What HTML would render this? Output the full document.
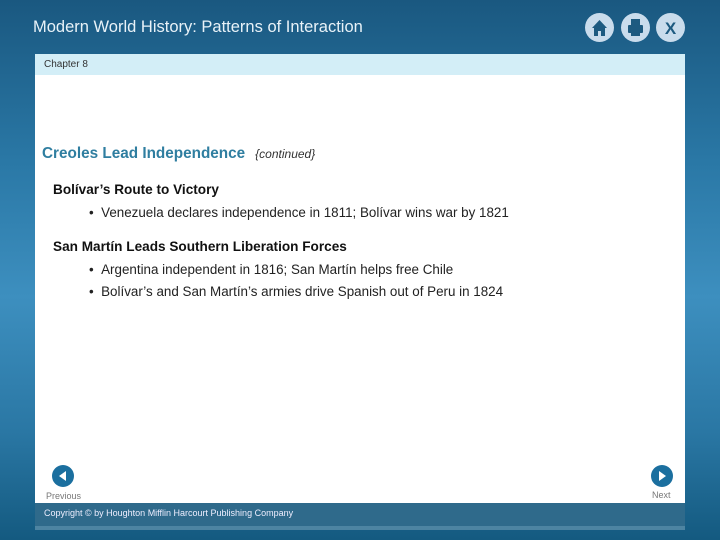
<!DOCTYPE html>
<html><head><style>
body{margin:0;width:720px;height:540px;overflow:hidden;font-family:"Liberation Sans",sans-serif;
background:linear-gradient(180deg,#1a5880 0%,#2a78a6 30%,#3d8fbf 55%,#2a77a4 80%,#145a80 100%);position:relative}
.t{position:absolute;left:33px;top:18px;color:#e8f2f8;font-size:16.5px}
.panel{position:absolute;left:35px;top:54px;width:650px;height:449px;background:#fff}
.ch{position:absolute;left:35px;top:54px;width:650px;height:21px;background:#d3eef7;font-size:10px;color:#333;line-height:21px}
.ch span{margin-left:9px}
.ft{position:absolute;left:35px;top:503px;width:650px;height:27px;background:#2f6a8b;color:#eef;font-size:9px}
.ft span{position:absolute;left:9px;top:5px}
.ft i{position:absolute;left:0;bottom:0;width:100%;height:4px;background:#4d84a2}
.ic{position:absolute;top:13px;width:29px;height:29px;border-radius:50%;background:#c9dcec}
.h{position:absolute;left:42px;top:145px;color:#2f7ea0;font-size:15.3px;font-weight:bold}
.h em{font-weight:normal;font-size:12px;margin-left:10px;color:#333}
.s{position:absolute;left:53px;font-size:13.6px;font-weight:bold;color:#111}
.b{position:absolute;left:89px;font-size:13.4px;color:#222}
.nav{position:absolute;top:465px;width:22px;height:22px;border-radius:50%;background:#1b6f9f}
.lbl{position:absolute;font-size:9px;color:#777}
</style></head><body>
<div class="t">Modern World History: Patterns of Interaction</div>
<div class="ic" style="left:585px"><svg width="29" height="29"><path d="M7 15 L14.5 7 L22 15 L20 15 L20 23 L16 23 L16 18 L13 18 L13 23 L9 23 L9 15Z" fill="#1d5a80"/></svg></div>
<div class="ic" style="left:621px"><svg width="29" height="29"><rect x="10" y="6" width="9" height="6" fill="#1d5a80"/><rect x="7" y="12" width="15" height="8" rx="1" fill="#1d5a80"/><rect x="10" y="18" width="9" height="5" fill="#1d5a80"/></svg></div>
<div class="ic" style="left:656px"><svg width="29" height="29"><text x="14.5" y="21" text-anchor="middle" font-family="Liberation Sans" font-weight="bold" font-size="17" fill="#1d5a80">X</text></svg></div>
<div class="panel"></div>
<div class="ch"><span>Chapter 8</span></div>
<div class="h">Creoles Lead Independence<em>{continued}</em></div>
<div class="s" style="top:182px">Bolívar’s Route to Victory</div>
<div class="b" style="top:205px">•&nbsp;&nbsp;Venezuela declares independence in 1811; Bolívar wins war by 1821</div>
<div class="s" style="top:239px">San Martín Leads Southern Liberation Forces</div>
<div class="b" style="top:262px">•&nbsp;&nbsp;Argentina independent in 1816; San Martín helps free Chile</div>
<div class="b" style="top:284px">•&nbsp;&nbsp;Bolívar’s and San Martín’s armies drive Spanish out of Peru in 1824</div>
<div class="nav" style="left:52px"><svg width="22" height="22"><path d="M7 11 L14 6 L14 16Z" fill="#fff"/></svg></div>
<div class="nav" style="left:651px"><svg width="22" height="22"><path d="M15 11 L8 6 L8 16Z" fill="#fff"/></svg></div>
<div class="lbl" style="left:46px;top:491px">Previous</div>
<div class="lbl" style="left:652px;top:490px">Next</div>
<div class="ft"><span>Copyright © by Houghton Mifflin Harcourt Publishing Company</span><i></i></div>
</body></html>
